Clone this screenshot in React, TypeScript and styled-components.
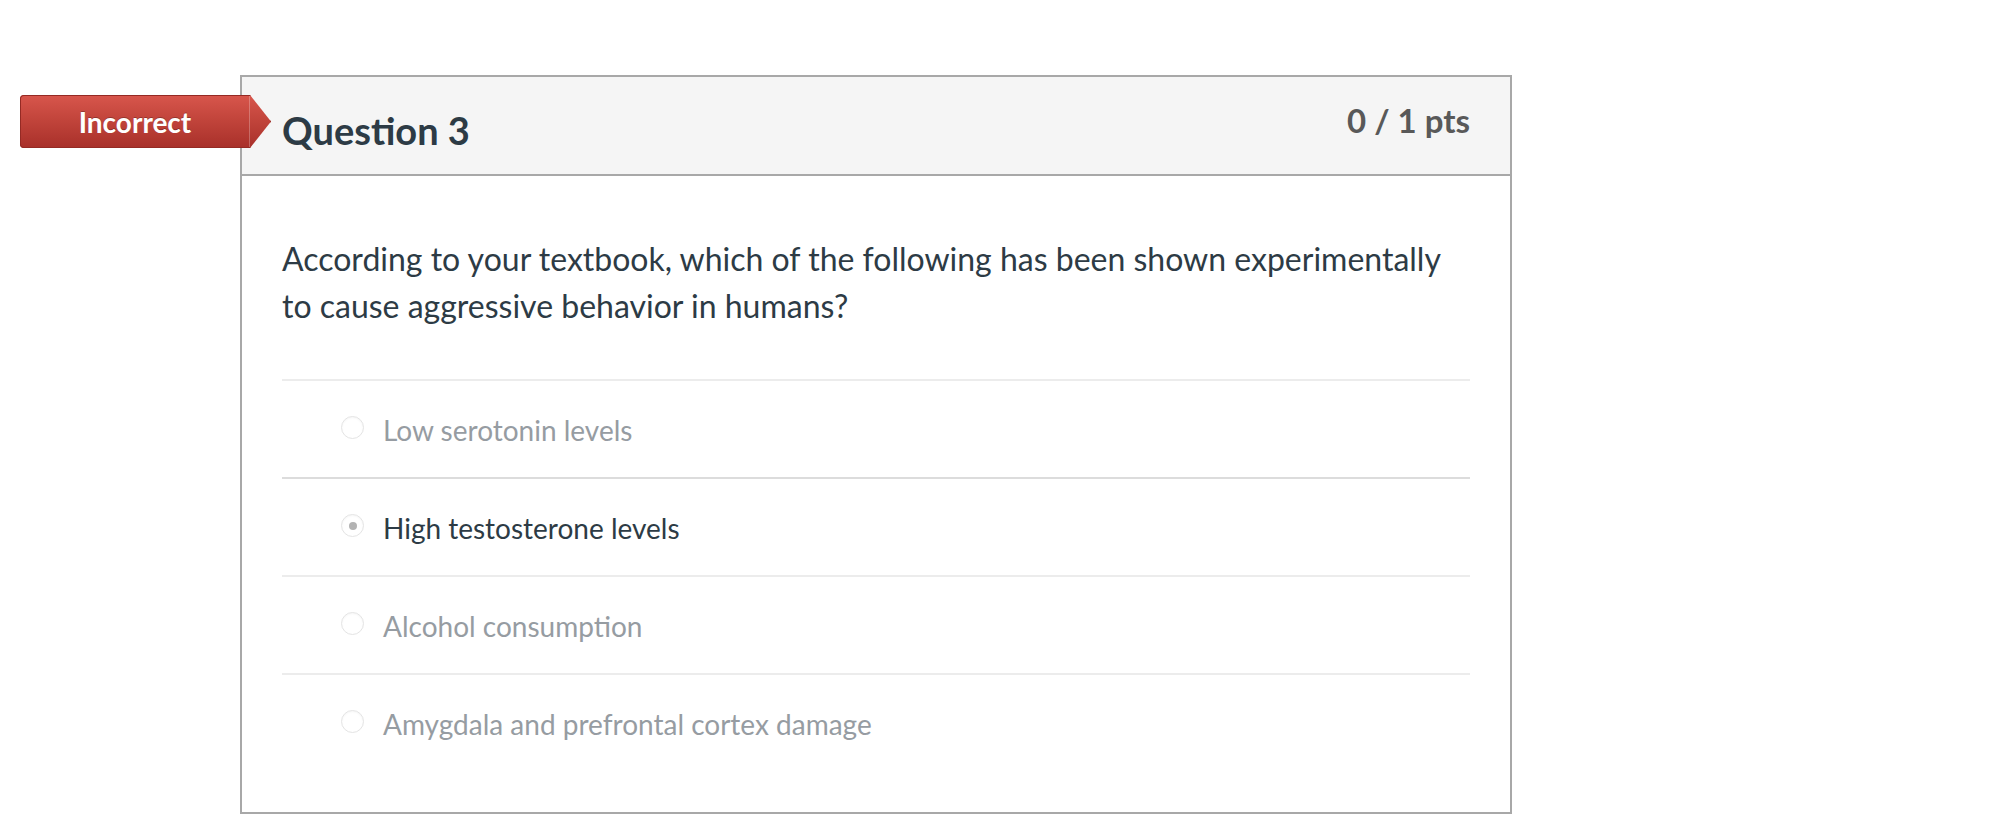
import styled, { createGlobalStyle } from 'styled-components';

const GlobalStyle = createGlobalStyle`
  html, body {
    margin: 0;
    padding: 0;
    background: #ffffff;
    font-family: Lato, "Open Sans", "Liberation Sans", sans-serif;
    color: #2d3b45;
  }
`;

// Layout
const Page = styled.div`
  padding: 75px 0 0 240px;
`;

const QuestionCard = styled.div`
  position: relative;
  width: 1272px;
  box-sizing: border-box;
  border: 2px solid #a8a8a8;
  background: #ffffff;
`;

const ResultBadge = styled.div`
  position: absolute;
  top: 18px;
  left: -222px;
  z-index: 2;
  width: 251px;
  height: 53px;
  box-sizing: border-box;
  padding-right: 21px;
  display: flex;
  align-items: center;
  justify-content: center;
  border-radius: 4px 0 0 4px;
  background: linear-gradient(to bottom, #d8564c 0%, #c0433a 50%, #a8302a 100%);
  box-shadow: inset 0 0 0 1px #952a24;
  clip-path: polygon(0 0, calc(100% - 21px) 0, 100% 50%, calc(100% - 21px) 100%, 0 100%);
  color: #ffffff;
  font-size: 28px;
  font-weight: 700;
  line-height: 1;
  text-shadow: 0 -1px 0 rgba(0, 0, 0, 0.25);

  &::after {
    content: '';
    position: absolute;
    top: 1px;
    bottom: 1px;
    right: 21px;
    width: 1px;
    background: rgba(255, 255, 255, 0.25);
  }
`;

const Header = styled.div`
  display: flex;
  justify-content: space-between;
  align-items: flex-start;
  height: 99px;
  box-sizing: border-box;
  padding: 24px 40px 0 40px;
  background: #f5f5f5;
  border-bottom: 2px solid #a8a8a8;
`;

const Title = styled.h2`
  margin: 7px 0 0 0;
  font-size: 38px;
  font-weight: 700;
  line-height: 1.2;
  color: #2d3b45;
`;

const Points = styled.div`
  font-size: 33px;
  font-weight: 700;
  line-height: 1.2;
  color: #595959;
`;

const Body = styled.div`
  padding: 59px 40px 41px 40px;
`;

const QuestionText = styled.p`
  margin: 0 0 50px 0;
  font-size: 32px;
  line-height: 47px;
  color: #2d3b45;
`;

const AnswerRow = styled.div<{ $dark?: boolean }>`
  display: flex;
  align-items: flex-start;
  gap: 19px;
  padding: 25px 0 23px 59px;
  border-top: 2px solid ${(p) => (p.$dark ? '#dcdcdc' : '#ececec')};
`;

const Radio = styled.span<{ $checked?: boolean }>`
  position: relative;
  flex: none;
  width: 23px;
  height: 23px;
  margin-top: 10px;
  box-sizing: border-box;
  border-radius: 50%;
  border: 1px solid #e4e4e4;
  background: #ffffff;
  box-shadow: inset 0 1px 2px rgba(0, 0, 0, 0.04);

  &::after {
    content: '';
    display: ${(p) => (p.$checked ? 'block' : 'none')};
    position: absolute;
    top: 50%;
    left: 50%;
    width: 8px;
    height: 8px;
    margin: -4px 0 0 -4px;
    border-radius: 50%;
    background: #b3b3b3;
  }
`;

const AnswerLabel = styled.span<{ $selected?: boolean }>`
  font-size: 28px;
  line-height: 48px;
  color: ${(p) => (p.$selected ? '#2d3b45' : '#969ca2')};
`;

const answers = [
  { text: 'Low serotonin levels', selected: false },
  { text: 'High testosterone levels', selected: true },
  { text: 'Alcohol consumption', selected: false },
  { text: 'Amygdala and prefrontal cortex damage', selected: false },
];

export default function App() {
  return (
    <>
      <GlobalStyle />
      <Page>
        <QuestionCard>
          <ResultBadge>Incorrect</ResultBadge>
          <Header>
            <Title>Question 3</Title>
            <Points>0 / 1 pts</Points>
          </Header>
          <Body>
            <QuestionText>
              According to your textbook, which of the following has been shown experimentally
              to cause aggressive behavior in humans?
            </QuestionText>
            {answers.map((a, i) => (
              <AnswerRow key={a.text} $dark={answers[i - 1]?.selected === false && a.selected}>
                <Radio $checked={a.selected} />
                <AnswerLabel $selected={a.selected}>{a.text}</AnswerLabel>
              </AnswerRow>
            ))}
          </Body>
        </QuestionCard>
      </Page>
    </>
  );
}
